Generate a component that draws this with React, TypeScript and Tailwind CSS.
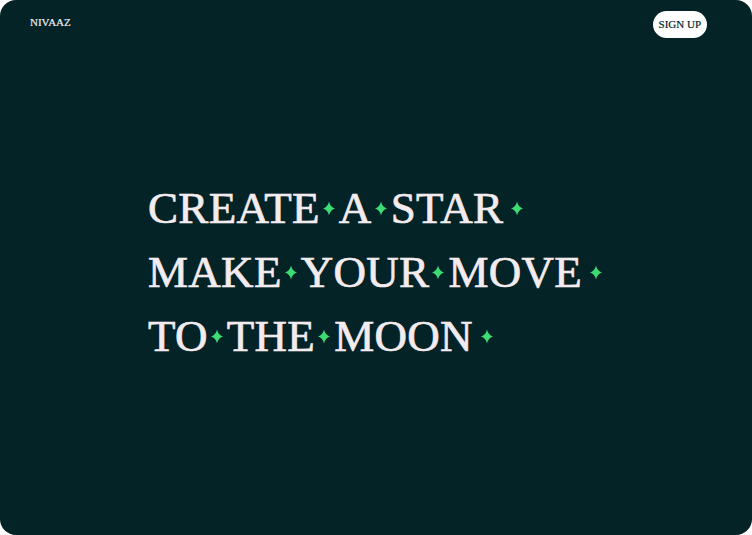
const lines = [
  ["CREATE", "A", "STAR"],
  ["MAKE", "YOUR", "MOVE"],
  ["TO", "THE", "MOON"],
];

function Sparkle({ last }: { last?: boolean }) {
  return (
    <svg
      viewBox="0 0 12 14"
      className={
        last
          ? "ml-[8px] h-[15px] w-[12px] shrink-0 text-[#3ddc72]"
          : "ml-[3px] mr-[4px] h-[15px] w-[12px] shrink-0 text-[#3ddc72]"
      }
      fill="currentColor"
    >
      <path d="M6 0 Q7.2 5.6 12 7 Q7.2 8.4 6 14 Q4.8 8.4 0 7 Q4.8 5.6 6 0 Z" />
    </svg>
  );
}

export default function App() {
  return (
    <div className="h-[535px] w-[752px] bg-white">
      <div
        className="flex h-full flex-col rounded-2xl bg-[#032326]"
        style={{ fontFamily: '"Liberation Serif", "Times New Roman", serif' }}
      >
        <header className="flex items-start justify-between pl-[30px] pr-[45px] pt-[11px]">
          <span className="mt-[3px] text-[11px] leading-4 text-[#f3eef0] [-webkit-text-stroke:0.2px_#f3eef0]">
            NIVAAZ
          </span>
          <button className="flex h-[27px] items-center rounded-full bg-white px-[6px] text-[11px] text-[#032326] [-webkit-text-stroke:0.2px_#032326]">
            SIGN UP
          </button>
        </header>

        <main className="pl-[148px] pt-[138px]">
          {lines.map((words, i) => (
            <div
              key={i}
              className="flex items-center text-[45px] leading-[64px] tracking-[0.3px] text-[#f3ebee] [-webkit-text-stroke:0.7px_#f3ebee]"
            >
              {words.map((w, j) => (
                <div key={w} className="flex items-center">
                  <span>{w}</span>
                  <Sparkle last={j === words.length - 1} />
                </div>
              ))}
            </div>
          ))}
        </main>
      </div>
    </div>
  );
}
